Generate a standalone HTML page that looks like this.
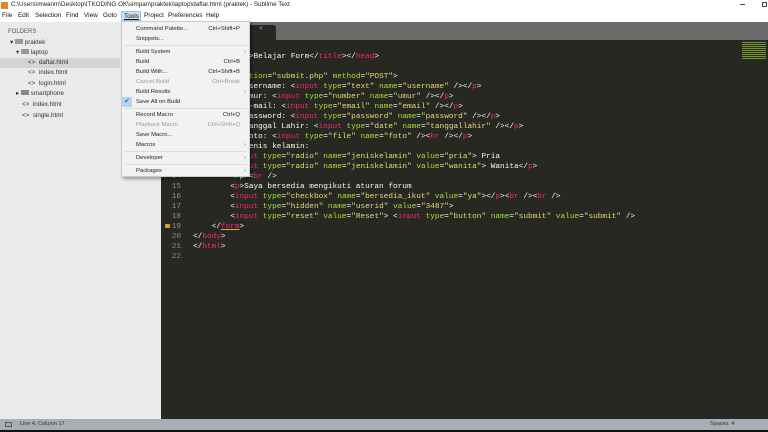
<!DOCTYPE html>
<html><head><meta charset="utf-8"><style>
*{margin:0;padding:0;box-sizing:border-box}
body{width:768px;height:432px;overflow:hidden;background:#fff;font-family:"Liberation Sans",sans-serif;position:relative}
.abs{position:absolute}
#title{left:0;top:0;width:768px;height:10px;background:#fff;font-size:6.3px;color:#222;line-height:10px;padding-left:11px;white-space:nowrap}
#menubar{left:0;top:10px;width:768px;height:12px;background:#fff;font-size:6.4px;line-height:12px;color:#111}
#menubar span{position:absolute;top:0}
#side{left:0;top:22px;width:161px;height:398px;background:#e9eaec;font-size:6.3px;color:#333}
#side div{position:absolute;white-space:nowrap}
#tabs{left:161px;top:22px;width:607px;height:18px;background:#6a6a6a}
#editor{left:161px;top:40px;width:607px;height:380px;background:#272822}
#code{left:161px;top:42px;font-family:"Liberation Mono",monospace;font-size:7.75px;line-height:10px;color:#f8f8f2;white-space:pre}
.ln{position:absolute;width:20px;text-align:right;color:#8f908a}
.cl{position:absolute;left:32px}
.t{color:#f92672}.a{color:#a6e22e}.s{color:#e6db74}
#status{left:0;top:419px;width:768px;height:11px;background:#a9aeb4;font-size:5.5px;line-height:11px;color:#333}
#menu{left:121px;top:21px;width:129px;height:156px;background:#f2f2f2;border:1px solid #ccc;box-shadow:2px 2px 3px rgba(0,0,0,.35);font-size:5.9px;color:#222}
#menu .it{position:absolute;left:14px;right:6px;height:10px;line-height:10px}
#menu .k{position:absolute;right:3px;top:0}
#menu .r{position:absolute;right:-3px;top:0;color:#666}
#menu .g{color:#9a9a9a}
#menu .sep{position:absolute;left:2px;right:2px;height:1px;background:#ddd}
</style></head><body>
<div id="title" class="abs"><span style="position:absolute;left:1px;top:2px;width:7px;height:7px;background:#e3862b"></span>C:\Users\mwanm\Desktop\ITKODING OK\simpan\praktek\laptop\daftar.html (praktek) - Sublime Text</div>
<div class="abs" style="left:740px;top:4px;width:5px;height:1px;background:#444"></div>
<div class="abs" style="left:762px;top:2px;width:5px;height:5px;border:1px solid #444"></div>
<div id="menubar" class="abs">
<span style="left:2px">File</span><span style="left:18px">Edit</span><span style="left:35px">Selection</span><span style="left:66px">Find</span><span style="left:84px">View</span><span style="left:103px">Goto</span>
<span style="left:121px;top:1px;width:20px;height:10px;line-height:10px;background:#cde2f5;border:1px solid #9cc3e5;padding-left:2px;text-decoration:underline">Tools</span>
<span style="left:144px">Project</span><span style="left:168px">Preferences</span><span style="left:206px">Help</span>
</div>
<div id="side" class="abs">
<div style="left:8px;top:7px;color:#555;font-size:6px">FOLDERS</div>
<div style="left:10px;top:17px">▾ <span style="display:inline-block;width:8px;height:5px;background:#999"></span> praktek</div>
<div style="left:16px;top:27px">▾ <span style="display:inline-block;width:8px;height:5px;background:#999"></span> laptop</div>
<div style="left:0;top:36px;width:120px;height:10px;background:#d3d4d6"></div>
<div style="left:28px;top:37px">&lt;&gt;&nbsp; daftar.html</div>
<div style="left:28px;top:47px">&lt;&gt;&nbsp; index.html</div>
<div style="left:28px;top:58px">&lt;&gt;&nbsp; login.html</div>
<div style="left:16px;top:68px">▸ <span style="display:inline-block;width:8px;height:5px;background:#888"></span> smartphone</div>
<div style="left:22px;top:79px">&lt;&gt;&nbsp; index.html</div>
<div style="left:22px;top:90px">&lt;&gt;&nbsp; single.html</div>
</div>
<div id="tabs" class="abs"><div class="abs" style="left:70px;top:3px;width:45px;height:15px;background:#272822;border-radius:3px 3px 0 0"></div><div class="abs" style="left:98px;top:4px;color:#bbb;font-size:6px">×</div></div>
<div id="editor" class="abs"></div>
<div class="abs" style="left:742px;top:42px;width:24px;height:18px;opacity:.6;background:repeating-linear-gradient(#a6e22e 0 1px,transparent 1px 2px)"></div>
<div id="code" class="abs">
<div class="ln" style="top:0">1</div><div class="cl" style="top:0">&lt;<span class="t">html</span>&gt;</div>
<div class="ln" style="top:10px">2</div><div class="cl" style="top:10px">&lt;<span class="t">head</span>&gt;&lt;<span class="t">title</span>&gt;Belajar Form&lt;/<span class="t">title</span>&gt;&lt;/<span class="t">head</span>&gt;</div>
<div class="ln" style="top:20px">3</div><div class="cl" style="top:20px">&lt;<span class="t">body</span>&gt;</div>
<div class="ln" style="top:30px">4</div><div class="cl" style="top:30px">    &lt;<span class="t">form</span> <span class="a">action</span>=<span class="s">"submit.php"</span> <span class="a">method</span>=<span class="s">"POST"</span>&gt;</div>
<div class="ln" style="top:40px">5</div><div class="cl" style="top:40px">        &lt;<span class="t">p</span>&gt;Username: &lt;<span class="t">input</span> <span class="a">type</span>=<span class="s">"text"</span> <span class="a">name</span>=<span class="s">"username"</span> /&gt;&lt;/<span class="t">p</span>&gt;</div>
<div class="ln" style="top:50px">6</div><div class="cl" style="top:50px">        &lt;<span class="t">p</span>&gt;Umur: &lt;<span class="t">input</span> <span class="a">type</span>=<span class="s">"number"</span> <span class="a">name</span>=<span class="s">"umur"</span> /&gt;&lt;/<span class="t">p</span>&gt;</div>
<div class="ln" style="top:60px">7</div><div class="cl" style="top:60px">        &lt;<span class="t">p</span>&gt;E-mail: &lt;<span class="t">input</span> <span class="a">type</span>=<span class="s">"email"</span> <span class="a">name</span>=<span class="s">"email"</span> /&gt;&lt;/<span class="t">p</span>&gt;</div>
<div class="ln" style="top:70px">8</div><div class="cl" style="top:70px">        &lt;<span class="t">p</span>&gt;Password: &lt;<span class="t">input</span> <span class="a">type</span>=<span class="s">"password"</span> <span class="a">name</span>=<span class="s">"password"</span> /&gt;&lt;/<span class="t">p</span>&gt;</div>
<div class="ln" style="top:80px">9</div><div class="cl" style="top:80px">        &lt;<span class="t">p</span>&gt;Tanggal Lahir: &lt;<span class="t">input</span> <span class="a">type</span>=<span class="s">"date"</span> <span class="a">name</span>=<span class="s">"tanggallahir"</span> /&gt;&lt;/<span class="t">p</span>&gt;</div>
<div class="ln" style="top:90px">10</div><div class="cl" style="top:90px">        &lt;<span class="t">p</span>&gt;Foto: &lt;<span class="t">input</span> <span class="a">type</span>=<span class="s">"file"</span> <span class="a">name</span>=<span class="s">"foto"</span> /&gt;&lt;<span class="t">br</span> /&gt;&lt;/<span class="t">p</span>&gt;</div>
<div class="ln" style="top:100px">11</div><div class="cl" style="top:100px">        &lt;<span class="t">p</span>&gt;Jenis kelamin:</div>
<div class="ln" style="top:110px">12</div><div class="cl" style="top:110px">        &lt;<span class="t">input</span> <span class="a">type</span>=<span class="s">"radio"</span> <span class="a">name</span>=<span class="s">"jeniskelamin"</span> <span class="a">value</span>=<span class="s">"pria"</span>&gt; Pria</div>
<div class="ln" style="top:120px">13</div><div class="cl" style="top:120px">        &lt;<span class="t">input</span> <span class="a">type</span>=<span class="s">"radio"</span> <span class="a">name</span>=<span class="s">"jeniskelamin"</span> <span class="a">value</span>=<span class="s">"wanita"</span>&gt; Wanita&lt;/<span class="t">p</span>&gt;</div>
<div class="ln" style="top:130px">14</div><div class="cl" style="top:130px">        &lt;/p&gt;&lt;<span class="t">br</span> /&gt;</div>
<div class="ln" style="top:140px">15</div><div class="cl" style="top:140px">        &lt;<span class="t">p</span>&gt;Saya bersedia mengikuti aturan forum</div>
<div class="ln" style="top:150px">16</div><div class="cl" style="top:150px">        &lt;<span class="t">input</span> <span class="a">type</span>=<span class="s">"checkbox"</span> <span class="a">name</span>=<span class="s">"bersedia_ikut"</span> <span class="a">value</span>=<span class="s">"ya"</span>&gt;&lt;/<span class="t">p</span>&gt;&lt;<span class="t">br</span> /&gt;&lt;<span class="t">br</span> /&gt;</div>
<div class="ln" style="top:160px">17</div><div class="cl" style="top:160px">        &lt;<span class="t">input</span> <span class="a">type</span>=<span class="s">"hidden"</span> <span class="a">name</span>=<span class="s">"userid"</span> <span class="a">value</span>=<span class="s">"3487"</span>&gt;</div>
<div class="ln" style="top:170px">18</div><div class="cl" style="top:170px">        &lt;<span class="t">input</span> <span class="a">type</span>=<span class="s">"reset"</span> <span class="a">value</span>=<span class="s">"Reset"</span>&gt; &lt;<span class="t">input</span> <span class="a">type</span>=<span class="s">"button"</span> <span class="a">name</span>=<span class="s">"submit"</span> <span class="a">value</span>=<span class="s">"submit"</span> /&gt;</div>
<div class="ln" style="top:180px">19</div><div class="cl" style="top:180px">    &lt;/<span class="t" style="text-decoration:underline;text-decoration-color:#e6a23c">form</span>&gt;</div>
<div class="ln" style="top:190px">20</div><div class="cl" style="top:190px">&lt;/<span class="t">body</span>&gt;</div>
<div class="ln" style="top:200px">21</div><div class="cl" style="top:200px">&lt;/<span class="t">html</span>&gt;</div>
<div class="ln" style="top:210px">22</div>
</div>
<div class="abs" style="left:165px;top:224px;width:5px;height:4px;background:#e0a030;border-radius:1px"></div>
<div id="menu" class="abs">
<div class="it" style="top:2px">Command Palette...<span class="k">Ctrl+Shift+P</span></div>
<div class="it" style="top:12px">Snippets...</div>
<div class="sep" style="top:23px"></div>
<div class="it" style="top:25px">Build System<span class="r">›</span></div>
<div class="it" style="top:35px">Build<span class="k">Ctrl+B</span></div>
<div class="it" style="top:45px">Build With...<span class="k">Ctrl+Shift+B</span></div>
<div class="it g" style="top:55px">Cancel Build<span class="k">Ctrl+Break</span></div>
<div class="it" style="top:65px">Build Results<span class="r">›</span></div>
<div class="abs" style="left:0;top:75px;width:10px;height:10px;background:#b9d3ee;color:#2a6fc4;font-size:7px;line-height:10px;text-align:center">✔</div>
<div class="it" style="top:75px">Save All on Build</div>
<div class="sep" style="top:86px"></div>
<div class="it" style="top:88px">Record Macro<span class="k">Ctrl+Q</span></div>
<div class="it g" style="top:98px">Playback Macro<span class="k">Ctrl+Shift+Q</span></div>
<div class="it" style="top:108px">Save Macro...</div>
<div class="it" style="top:118px">Macros<span class="r">›</span></div>
<div class="sep" style="top:129px"></div>
<div class="it" style="top:131px">Developer<span class="r">›</span></div>
<div class="sep" style="top:142px"></div>
<div class="it" style="top:144px">Packages<span class="r">›</span></div>
</div>
<div id="status" class="abs"><span style="position:absolute;left:5px;top:3px;width:7px;height:5px;border:1px solid #555"></span><span style="position:absolute;left:20px">Line 4, Column 17</span><span style="position:absolute;left:710px">Spaces: 4</span></div>
<div class="abs" style="left:0;top:430px;width:768px;height:2px;background:#111"></div>
</body></html>
